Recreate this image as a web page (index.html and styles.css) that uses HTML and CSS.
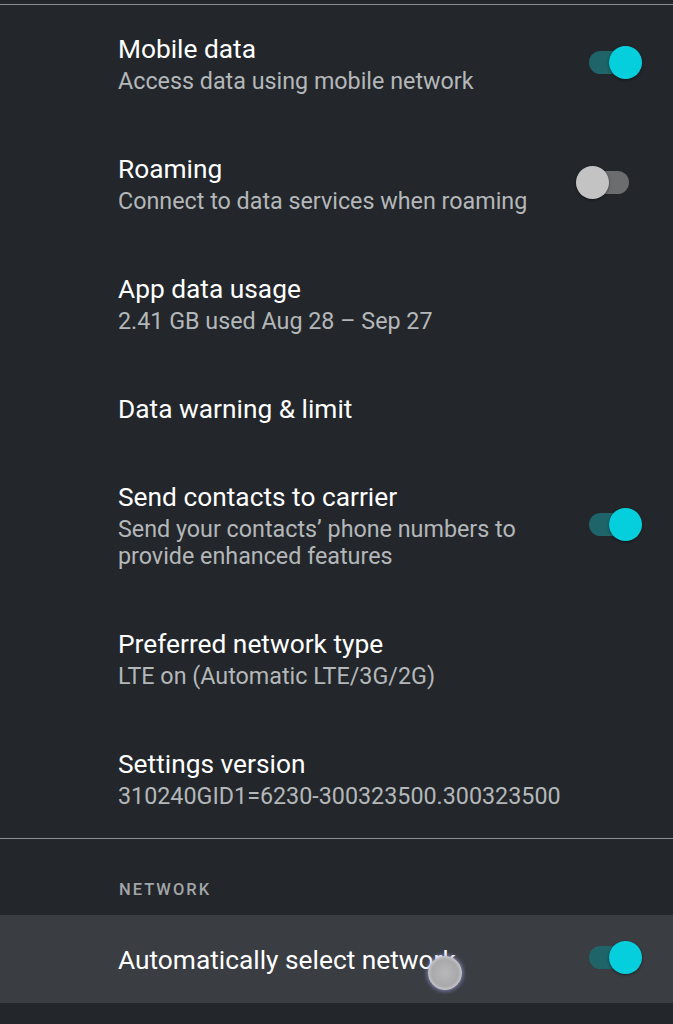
FILE: index.html
```html
<!DOCTYPE html>
<html lang="en">
<head>
<meta charset="utf-8">
<title>Mobile network</title>
<link rel="stylesheet" href="styles.css">
</head>
<body>
<div class="screen">
  <div class="top-line"></div>
  <div class="row">
    <div class="text">
      <div class="title">Mobile data</div>
      <div class="summary">Access data using mobile network</div>
    </div>
    <div class="switch on"><div class="track"></div><div class="thumb"></div></div>
  </div>
  <div class="row">
    <div class="text">
      <div class="title">Roaming</div>
      <div class="summary">Connect to data services when roaming</div>
    </div>
    <div class="switch off shifted"><div class="track"></div><div class="thumb"></div></div>
  </div>
  <div class="row">
    <div class="text">
      <div class="title">App data usage</div>
      <div class="summary">2.41 GB used Aug 28 – Sep 27</div>
    </div>
  </div>
  <div class="row">
    <div class="text">
      <div class="title">Data warning &amp; limit</div>
    </div>
  </div>
  <div class="row">
    <div class="text">
      <div class="title">Send contacts to carrier</div>
      <div class="summary">Send your contacts’ phone numbers to<br>provide enhanced features</div>
    </div>
    <div class="switch on"><div class="track"></div><div class="thumb"></div></div>
  </div>
  <div class="row">
    <div class="text">
      <div class="title">Preferred network type</div>
      <div class="summary">LTE on (Automatic LTE/3G/2G)</div>
    </div>
  </div>
  <div class="row">
    <div class="text">
      <div class="title">Settings version</div>
      <div class="summary">310240GID1=6230-300323500.300323500</div>
    </div>
  </div>
  <div class="divider"></div>
  <div class="section-header">NETWORK</div>
  <div class="row pressed">
    <div class="text">
      <div class="title">Automatically select network</div>
    </div>
    <div class="switch on"><div class="track"></div><div class="thumb"></div></div>
    <div class="touch"></div>
  </div>
</div>
</body>
</html>
```
FILE: styles.css
```css
html, body {
  margin: 0;
  padding: 0;
  background: #23272b;
}
.screen {
  width: 673px;
  height: 1024px;
  overflow: hidden;
  background: #23272b;
  font-family: Roboto, "Noto Sans", sans-serif;
  display: flex;
  flex-direction: column;
}
.top-line {
  height: 4px;
  background: #23272b;
  border-bottom: 1px solid #8c8f92;
  flex-shrink: 0;
}
.row {
  position: relative;
  display: flex;
  align-items: center;
  padding: 30px 31px 30px 118px;
  flex-shrink: 0;
}
.text {
  flex: 1;
  min-width: 0;
  white-space: nowrap;
}
.title {
  font-size: 26.3px;
  line-height: 28px;
  color: #ffffff;
}
.summary {
  margin-top: 5px;
  font-size: 23.3px;
  line-height: 27px;
  color: #b4b7b9;
}
.switch {
  position: relative;
  width: 53px;
  height: 33px;
  flex-shrink: 0;
  margin-top: -5px;
}
.switch.shifted {
  margin-right: 13px;
}
.track {
  position: absolute;
  left: 0;
  right: 0;
  top: 5px;
  height: 23px;
  border-radius: 12px;
}
.thumb {
  position: absolute;
  top: 0;
  width: 33px;
  height: 33px;
  border-radius: 50%;
  box-shadow: 0 1px 3px rgba(0,0,0,0.45);
}
.switch.on .track { background: #1e6469; }
.switch.on .thumb { right: 0; background: #05cfdd; }
.switch.off .track { background: #6b6d6f; }
.switch.off .thumb { left: 0; background: #c3c3c3; }
.divider {
  height: 1px;
  background: #8c8f92;
  margin-top: -2px;
  flex-shrink: 0;
}
.section-header {
  height: 76px;
  padding-left: 119px;
  box-sizing: border-box;
  padding-top: 42px;
  font-size: 16.5px;
  line-height: 18px;
  letter-spacing: 2px;
  font-weight: 500;
  color: #a2a5a8;
  flex-shrink: 0;
}
.row.pressed {
  background: #3a3d42;
  padding-top: 31px;
  padding-bottom: 29px;
}
.touch {
  position: absolute;
  left: 428px;
  top: 41px;
  width: 34px;
  height: 34px;
  border-radius: 50%;
  background: radial-gradient(circle at 50% 50%, #b8b8ba 0%, #a9a9ac 55%, #d6d6da 80%, rgba(200,200,230,0.6) 100%);
  box-shadow: 0 0 4px 1px rgba(160,160,230,0.7);
}
```
